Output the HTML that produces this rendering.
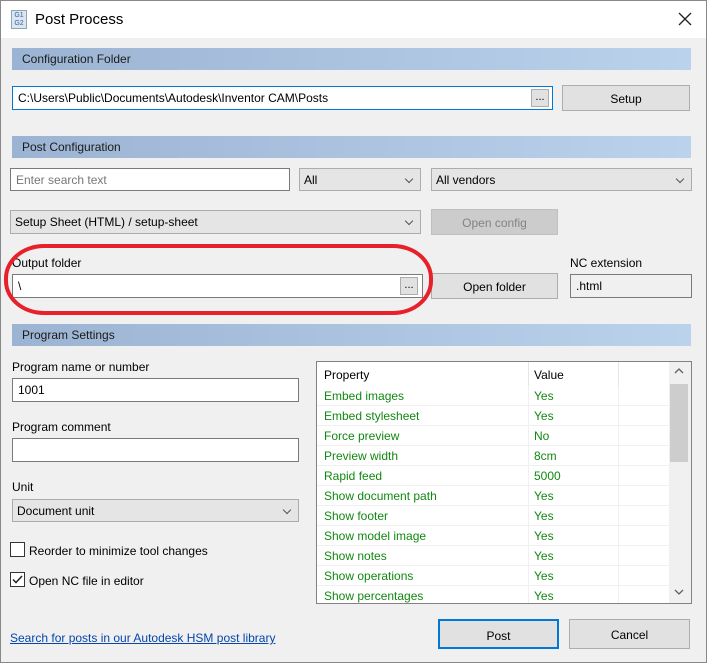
<!DOCTYPE html>
<html><head><style>
*{box-sizing:border-box;margin:0;padding:0}
body{width:707px;height:663px;background:#f0f0f0;font-family:"Liberation Sans",sans-serif;font-size:12px;color:#000;position:relative;overflow:hidden}
.a{position:absolute}
.title{left:0;top:0;width:707px;height:38px;background:#fff}
.hdr{left:12px;width:679px;height:22px;background:linear-gradient(90deg,#9cb4d3,#bad2eb);padding:4px 0 0 10px;font-size:12px;color:#1a1a1a}
.inp{background:#fff;border:1px solid #7a7a7a;padding:4px 5px;font-size:12px}
.btn{background:#e1e1e1;border:1px solid #adadad;text-align:center;font-size:12px}
.sel{background:#e5e5e5;border:1px solid #acacac;padding:4px 4px;font-size:12px}
.sel:after{content:"";position:absolute;right:8px;top:7px;width:5px;height:5px;border-right:1px solid #555;border-bottom:1px solid #555;transform:rotate(45deg)}
.lbl{font-size:12px}
.dots{background:#e1e1e1;border:1px solid #adadad;width:18px;height:18px;font-size:11px;text-align:center;line-height:14px}
.row{position:absolute;left:0;width:352px;height:20px;border-bottom:1px solid #f0f0f0;color:#118811;font-size:12px}
.row span{position:absolute;top:3px}
.cb{width:15px;height:15px;border:1px solid #333;background:#fff}
</style></head><body>
<div class="a title"></div>
<div class="a" style="left:0;top:0;width:707px;height:663px;border:1px solid #888;z-index:5;pointer-events:none"></div>
<div class="a" style="left:11px;top:10px;width:16px;height:19px;background:#dde6f0;border:1px solid #8aa;font-size:7px;color:#3060a0;line-height:8px;text-align:center;padding-top:1px">G1<br>G2</div>
<div class="a" style="left:35px;top:11px;font-size:15px">Post Process</div>
<svg class="a" style="left:678px;top:12px" width="14" height="14"><path d="M1 1L13 13M13 1L1 13" stroke="#222" stroke-width="1.3"/></svg>

<div class="a hdr" style="top:48px">Configuration Folder</div>
<div class="a inp" style="left:12px;top:86px;width:541px;height:24px;border-color:#0078d7;padding:4px 5px">C:\Users\Public\Documents\Autodesk\Inventor CAM\Posts</div>
<div class="a dots" style="left:531px;top:89px">...</div>
<div class="a btn" style="left:562px;top:85px;width:128px;height:26px;padding-top:6px">Setup</div>

<div class="a hdr" style="top:136px">Post Configuration</div>
<div class="a inp" style="left:10px;top:168px;width:280px;height:23px;color:#777">Enter search text</div>
<div class="a sel" style="left:299px;top:168px;width:122px;height:23px">All</div>
<div class="a sel" style="left:431px;top:168px;width:261px;height:23px">All vendors</div>
<div class="a sel" style="left:10px;top:210px;width:411px;height:24px">Setup Sheet (HTML) / setup-sheet</div>
<div class="a btn" style="left:431px;top:209px;width:127px;height:26px;padding-top:6px;background:#ccc;border-color:#bfbfbf;color:#838383">Open config</div>

<div class="a lbl" style="left:12px;top:256px">Output folder</div>
<div class="a inp" style="left:12px;top:274px;width:411px;height:24px">\</div>
<div class="a dots" style="left:400px;top:277px">...</div>
<div class="a btn" style="left:431px;top:273px;width:127px;height:26px;padding-top:6px">Open folder</div>
<div class="a lbl" style="left:570px;top:256px">NC extension</div>
<div class="a inp" style="left:570px;top:274px;width:122px;height:24px;background:#f0f0f0">.html</div>
<div class="a" style="left:4px;top:244px;width:429px;height:71px;border:4px solid #e8202a;border-radius:40px/34px"></div>

<div class="a hdr" style="top:324px">Program Settings</div>
<div class="a lbl" style="left:12px;top:360px">Program name or number</div>
<div class="a inp" style="left:12px;top:378px;width:287px;height:24px">1001</div>
<div class="a lbl" style="left:12px;top:420px">Program comment</div>
<div class="a inp" style="left:12px;top:438px;width:287px;height:24px"></div>
<div class="a lbl" style="left:12px;top:480px">Unit</div>
<div class="a sel" style="left:12px;top:499px;width:287px;height:23px">Document unit</div>
<div class="a cb" style="left:10px;top:542px"></div>
<div class="a lbl" style="left:29px;top:544px">Reorder to minimize tool changes</div>
<div class="a cb" style="left:10px;top:572px"></div>
<svg class="a" style="left:11px;top:573px" width="13" height="13"><path d="M2 6.5L5 9.5L11 3" stroke="#222" stroke-width="1.5" fill="none"/></svg>
<div class="a lbl" style="left:29px;top:574px">Open NC file in editor</div>
<div class="a" style="left:10px;top:631px;font-size:12px;color:#0645ad;text-decoration:underline">Search for posts in our Autodesk HSM post library</div>

<div class="a" style="left:316px;top:361px;width:376px;height:243px;background:#fff;border:1px solid #828282;overflow:hidden">
<div class="a" style="left:0;top:0;width:352px;height:24px;font-size:12px"><span class="a" style="left:7px;top:6px">Property</span><span class="a" style="left:217px;top:6px">Value</span></div>
<div class="a" style="left:211px;top:0;width:1px;height:24px;background:#e5e5e5"></div>
<div class="a" style="left:301px;top:0;width:1px;height:24px;background:#e5e5e5"></div>
<div class="a" style="left:0;top:24px;width:352px;height:220px">
<div class="a" style="left:211px;top:0;width:1px;height:220px;background:#f0f0f0"></div>
<div class="a" style="left:301px;top:0;width:1px;height:220px;background:#f0f0f0"></div>
<div class="row" style="top:0"><span style="left:7px">Embed images</span><span style="left:217px">Yes</span></div>
<div class="row" style="top:20px"><span style="left:7px">Embed stylesheet</span><span style="left:217px">Yes</span></div>
<div class="row" style="top:40px"><span style="left:7px">Force preview</span><span style="left:217px">No</span></div>
<div class="row" style="top:60px"><span style="left:7px">Preview width</span><span style="left:217px">8cm</span></div>
<div class="row" style="top:80px"><span style="left:7px">Rapid feed</span><span style="left:217px">5000</span></div>
<div class="row" style="top:100px"><span style="left:7px">Show document path</span><span style="left:217px">Yes</span></div>
<div class="row" style="top:120px"><span style="left:7px">Show footer</span><span style="left:217px">Yes</span></div>
<div class="row" style="top:140px"><span style="left:7px">Show model image</span><span style="left:217px">Yes</span></div>
<div class="row" style="top:160px"><span style="left:7px">Show notes</span><span style="left:217px">Yes</span></div>
<div class="row" style="top:180px"><span style="left:7px">Show operations</span><span style="left:217px">Yes</span></div>
<div class="row" style="top:200px"><span style="left:7px">Show percentages</span><span style="left:217px">Yes</span></div>
</div>
<div class="a" style="left:352px;top:0;width:22px;height:241px;background:#f0f0f0"></div>
<div class="a" style="left:353px;top:22px;width:18px;height:78px;background:#cdcdcd"></div>
<svg class="a" style="left:356px;top:5px" width="12" height="8"><path d="M2 6L6 2L10 6" stroke="#606060" stroke-width="1.3" fill="none"/></svg>
<svg class="a" style="left:356px;top:226px" width="12" height="8"><path d="M2 2L6 6L10 2" stroke="#606060" stroke-width="1.3" fill="none"/></svg>
</div>

<div class="a btn" style="left:438px;top:619px;width:121px;height:30px;padding-top:8px;border:2px solid #0078d7">Post</div>
<div class="a btn" style="left:569px;top:619px;width:121px;height:30px;padding-top:8px">Cancel</div>
</body></html>
